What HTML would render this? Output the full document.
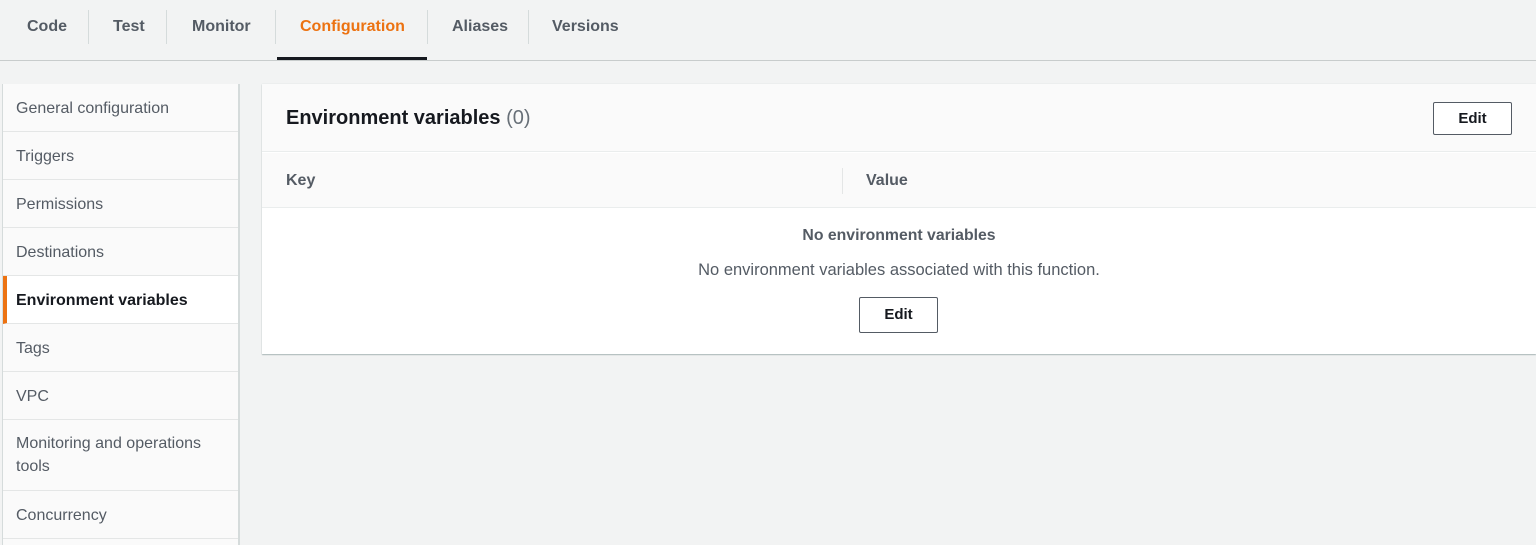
<!DOCTYPE html>
<html><head><style>
*{margin:0;padding:0;box-sizing:border-box}
html,body{width:1536px;height:545px;overflow:hidden}
body{background:#f2f3f3;font-family:"Liberation Sans",sans-serif;color:#545b64;position:relative}
.a{position:absolute;white-space:nowrap}
.tab{position:absolute;top:18px;font-size:16px;font-weight:bold;color:#545b64}
.sep{position:absolute;top:10px;width:1px;height:34px;background:#d5dbdb}
.side{position:absolute;left:2px;top:84px;width:238px;height:461px;background:#fafafa;border-left:1px solid #d5dbdb;border-right:2px solid #d5dbdb;overflow:hidden}
.it{position:absolute;left:0;width:236px;border-bottom:1px solid #e4e6e6;font-size:16px;color:#545b64;padding-left:13px}
.btn{position:absolute;border:1px solid #545b64;border-radius:2px;background:#fff;font-size:15px;font-weight:bold;color:#16191f;text-align:center}
</style></head><body>
<div class="tab" style="left:27px">Code</div>
<div class="sep" style="left:88px"></div>
<div class="tab" style="left:113px">Test</div>
<div class="sep" style="left:166px"></div>
<div class="tab" style="left:192px">Monitor</div>
<div class="sep" style="left:275px"></div>
<div class="tab" style="left:300px;color:#ec7211">Configuration</div>
<div class="a" style="left:277px;top:57px;width:150px;height:3px;background:#16191f"></div>
<div class="sep" style="left:427px"></div>
<div class="tab" style="left:452px">Aliases</div>
<div class="sep" style="left:528px"></div>
<div class="tab" style="left:552px">Versions</div>
<div class="a" style="left:0;top:60px;width:1536px;height:1px;background:#c8cccc"></div>

<div class="side">
<div class="it" style="top:0;height:48px;line-height:49px">General configuration</div>
<div class="it" style="top:48px;height:48px;line-height:49px">Triggers</div>
<div class="it" style="top:96px;height:48px;line-height:49px">Permissions</div>
<div class="it" style="top:144px;height:48px;line-height:49px">Destinations</div>
<div class="it" style="top:192px;height:48px;line-height:49px;background:#fff;font-weight:bold;color:#16191f;border-left:4px solid #ec7211;padding-left:9px">Environment variables</div>
<div class="it" style="top:240px;height:48px;line-height:49px">Tags</div>
<div class="it" style="top:288px;height:48px;line-height:49px">VPC</div>
<div class="it" style="top:336px;height:71px;line-height:23px;padding-top:12px;white-space:normal">Monitoring and operations tools</div>
<div class="it" style="top:407px;height:48px;line-height:49px">Concurrency</div>
</div>

<div class="a" style="left:262px;top:84px;width:1274px;height:270px;background:#fff;box-shadow:0 1px 1px #aab7b8,0 0 1px #d5dbdb">
<div class="a" style="left:0;top:0;width:1274px;height:68px;background:#fafafa;border-bottom:1px solid #eaeded"></div>
<div class="a" style="left:24px;top:23px;font-size:20px;font-weight:bold;color:#16191f">Environment variables <span style="font-weight:normal;color:#687078">(0)</span></div>
<div class="btn" style="left:1171px;top:18px;width:79px;height:33px;line-height:31px">Edit</div>
<div class="a" style="left:0;top:69px;width:1274px;height:55px;background:#fafafa;border-bottom:1px solid #eaeded"></div>
<div class="a" style="left:24px;top:88px;font-size:16px;font-weight:bold;color:#545b64">Key</div>
<div class="a" style="left:580px;top:84px;width:1px;height:26px;background:#e4e6e6"></div>
<div class="a" style="left:604px;top:88px;font-size:16px;font-weight:bold;color:#545b64">Value</div>
<div class="a" style="left:0;top:143px;width:1274px;text-align:center;font-size:15.8px;font-weight:bold;color:#545b64">No environment variables</div>
<div class="a" style="left:0;top:177px;width:1274px;text-align:center;font-size:16.5px;color:#545b64">No environment variables associated with this function.</div>
<div class="btn" style="left:597px;top:213px;width:79px;height:36px;line-height:34px">Edit</div>
</div>
</body></html>
